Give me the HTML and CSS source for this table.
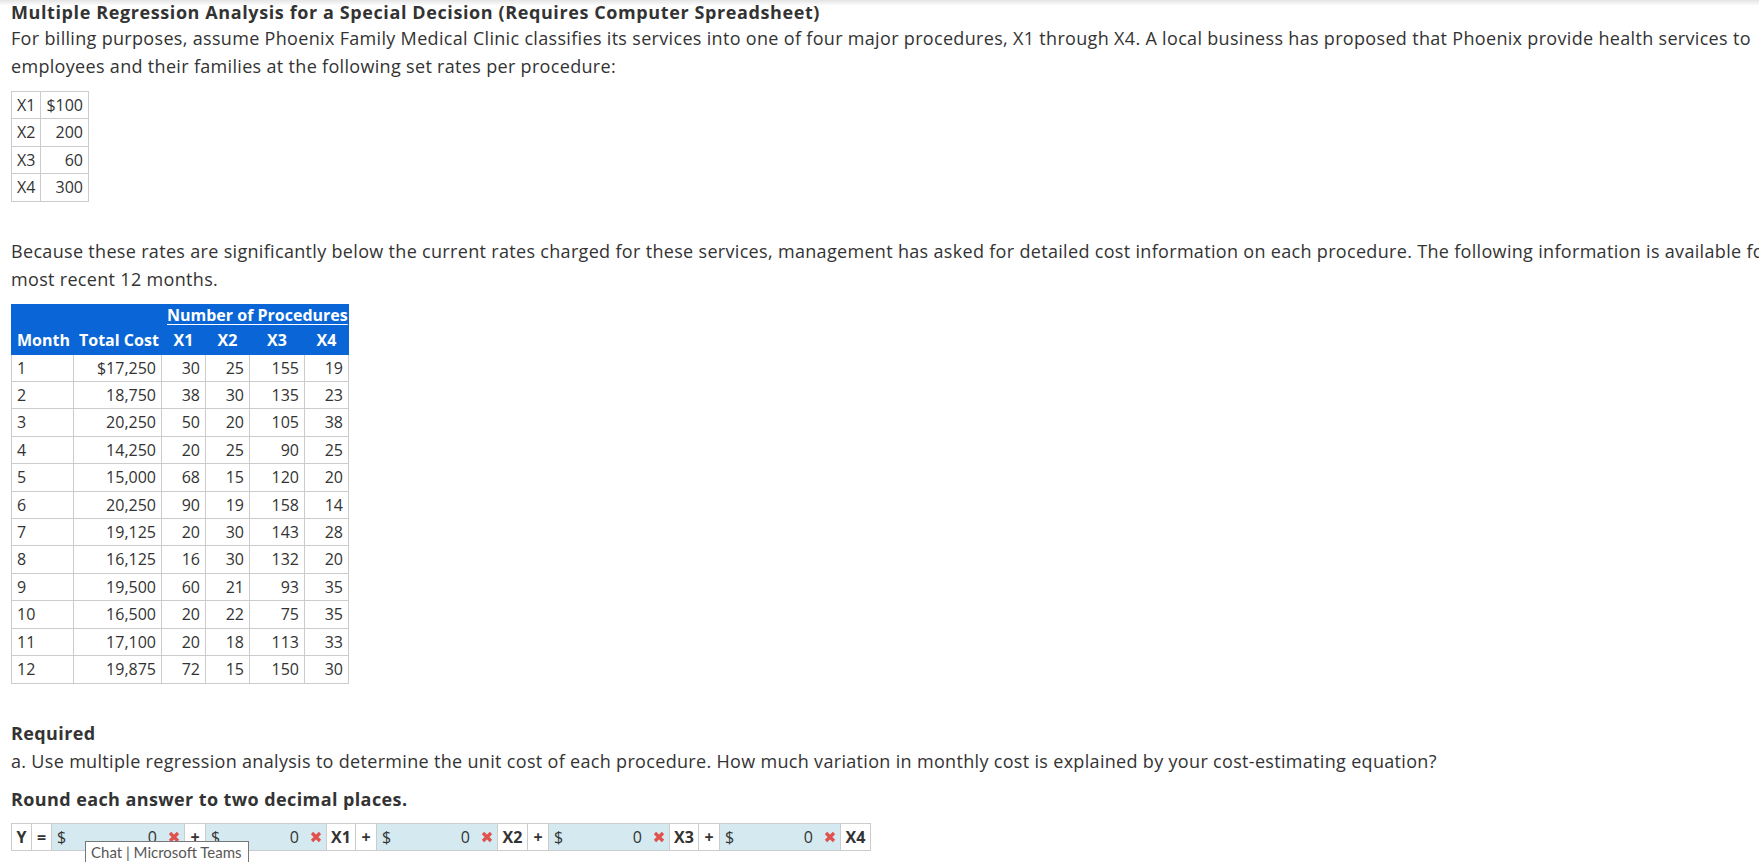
FILE: index.html
```
<!DOCTYPE html>
<html lang="en">
<head>
    <meta charset="UTF-8">
    <title>Multiple Regression Analysis</title>
    <link rel="stylesheet" href="styles.css">
</head>
<body>
    <div class="page">
        <h1 class="title">Multiple Regression Analysis for a Special Decision (Requires Computer Spreadsheet)</h1>
        <p class="text">For billing purposes, assume Phoenix Family Medical Clinic classifies its services into one of four major procedures, X1 through X4. A local business has proposed that Phoenix provide health services to<br>employees and their families at the following set rates per procedure:</p>

        <table class="grid rates">
            <tr><td>X1</td><td class="num">$100</td></tr>
            <tr><td>X2</td><td class="num">200</td></tr>
            <tr><td>X3</td><td class="num">60</td></tr>
            <tr><td>X4</td><td class="num">300</td></tr>
        </table>

        <p class="text">Because these rates are significantly below the current rates charged for these services, management has asked for detailed cost information on each procedure. The following information is available for the<br>most recent 12 months.</p>

        <table class="grid data">
            <colgroup>
                <col class="w-month"><col class="w-cost"><col class="w-x"><col class="w-x"><col class="w-x3"><col class="w-x">
            </colgroup>
            <tr class="head top">
                <th colspan="2"></th>
                <th colspan="4" class="group"><span>Number of Procedures</span></th>
            </tr>
            <tr class="head">
                <th class="left">Month</th>
                <th class="num">Total Cost</th>
                <th>X1</th><th>X2</th><th>X3</th><th>X4</th>
            </tr>
            <tr><td>1</td><td class="num">$17,250</td><td class="num">30</td><td class="num">25</td><td class="num">155</td><td class="num">19</td></tr>
            <tr><td>2</td><td class="num">18,750</td><td class="num">38</td><td class="num">30</td><td class="num">135</td><td class="num">23</td></tr>
            <tr><td>3</td><td class="num">20,250</td><td class="num">50</td><td class="num">20</td><td class="num">105</td><td class="num">38</td></tr>
            <tr><td>4</td><td class="num">14,250</td><td class="num">20</td><td class="num">25</td><td class="num">90</td><td class="num">25</td></tr>
            <tr><td>5</td><td class="num">15,000</td><td class="num">68</td><td class="num">15</td><td class="num">120</td><td class="num">20</td></tr>
            <tr><td>6</td><td class="num">20,250</td><td class="num">90</td><td class="num">19</td><td class="num">158</td><td class="num">14</td></tr>
            <tr><td>7</td><td class="num">19,125</td><td class="num">20</td><td class="num">30</td><td class="num">143</td><td class="num">28</td></tr>
            <tr><td>8</td><td class="num">16,125</td><td class="num">16</td><td class="num">30</td><td class="num">132</td><td class="num">20</td></tr>
            <tr><td>9</td><td class="num">19,500</td><td class="num">60</td><td class="num">21</td><td class="num">93</td><td class="num">35</td></tr>
            <tr><td>10</td><td class="num">16,500</td><td class="num">20</td><td class="num">22</td><td class="num">75</td><td class="num">35</td></tr>
            <tr><td>11</td><td class="num">17,100</td><td class="num">20</td><td class="num">18</td><td class="num">113</td><td class="num">33</td></tr>
            <tr><td>12</td><td class="num">19,875</td><td class="num">72</td><td class="num">15</td><td class="num">150</td><td class="num">30</td></tr>
        </table>

        <h2 class="req">Required</h2>
        <p class="text">a. Use multiple regression analysis to determine the unit cost of each procedure. How much variation in monthly cost is explained by your cost-estimating equation?</p>
        <p class="round">Round each answer to two decimal places.</p>

        <div class="eq">
            <div class="cell sym w20">Y</div>
            <div class="cell sym w20">=</div>
            <div class="cell input first"><span>$</span><span class="val">0</span><svg class="bad" viewBox="0 0 12 12"><path d="M2 2L10 10M10 2L2 10"/></svg></div>
            <div class="cell sym w21">+</div>
            <div class="cell input"><span>$</span><span class="val">0</span><svg class="bad" viewBox="0 0 12 12"><path d="M2 2L10 10M10 2L2 10"/></svg></div>
            <div class="cell sym w29">X1</div>
            <div class="cell sym w21">+</div>
            <div class="cell input"><span>$</span><span class="val">0</span><svg class="bad" viewBox="0 0 12 12"><path d="M2 2L10 10M10 2L2 10"/></svg></div>
            <div class="cell sym w30">X2</div>
            <div class="cell sym w21">+</div>
            <div class="cell input"><span>$</span><span class="val">0</span><svg class="bad" viewBox="0 0 12 12"><path d="M2 2L10 10M10 2L2 10"/></svg></div>
            <div class="cell sym w29">X3</div>
            <div class="cell sym w21">+</div>
            <div class="cell input"><span>$</span><span class="val">0</span><svg class="bad" viewBox="0 0 12 12"><path d="M2 2L10 10M10 2L2 10"/></svg></div>
            <div class="cell sym w30">X4</div>
        </div>

        <div class="tip">Chat | Microsoft Teams</div>
    </div>
</body>
</html>
```

FILE: styles.css
```
html, body {
    margin: 0;
    padding: 0;
    height: 100%;
}
body {
    background: #fff linear-gradient(#e4e4e4, #fff 6px) no-repeat;
    font-family: "Open Sans", sans-serif;
    color: #333;
    overflow: hidden;
}
.page {
    position: relative;
    min-height: 100%;
    padding-left: 11px;
}
.title {
    margin: 0;
    font-size: 18px;
    line-height: 24px;
    font-weight: 700;
    letter-spacing: 0.6px;
    white-space: nowrap;
}
.text {
    margin: 0;
    font-size: 18px;
    line-height: 28px;
    letter-spacing: 0.32px;
    white-space: nowrap;
}
.grid {
    border-collapse: collapse;
    font-size: 16px;
}
.grid td {
    border: 1px solid #ccc;
    line-height: 24.4px;
    padding: 1px 5px;
}
.num {
    text-align: right;
}
.rates {
    margin: 11px 0 35px;
}
.data {
    margin: 11px 0 35px;
    table-layout: fixed;
    width: 338px;
}
.w-month { width: 62px; }
.w-cost { width: 88px; }
.w-x { width: 44px; }
.w-x3 { width: 55px; }
.data th {
    background: #0a66d6;
    border: 1px solid #0a66d6;
    color: #fff;
    font-weight: 700;
    line-height: 28px;
    padding: 0 5px;
    text-align: center;
    white-space: nowrap;
}
.data .top th {
    line-height: 20px;
}
.data th.left {
    text-align: left;
}
.data th.num {
    text-align: right;
}
.group span {
    text-decoration: underline;
    text-underline-offset: 3px;
}
.req {
    margin: 0;
    font-size: 18px;
    line-height: 28px;
    font-weight: 700;
    letter-spacing: 0.4px;
}
.round {
    margin: 10px 0 10px;
    font-size: 18px;
    line-height: 28px;
    font-weight: 700;
    letter-spacing: 0.4px;
}
.eq {
    display: flex;
    width: max-content;
    border: 1px solid #ccc;
    border-right: none;
    font-size: 16px;
    line-height: 26px;
}
.cell {
    box-sizing: border-box;
    height: 26px;
    border-right: 1px solid #ccc;
}
.sym {
    text-align: center;
    font-weight: 700;
}
.w20 { width: 20px; }
.w21 { width: 21px; }
.w29 { width: 29px; }
.w30 { width: 30px; }
.input {
    display: flex;
    align-items: center;
    width: 121px;
    padding: 0 4px 0 5px;
    background: #d4e9f0;
}
.input.first {
    width: 133px;
}
.val {
    margin-left: auto;
}
.bad {
    width: 12px;
    height: 12px;
    margin-left: 11px;
    fill: none;
    stroke: #e0514d;
    stroke-width: 3.2;
}
.tip {
    position: absolute;
    left: 85px;
    top: 841px;
    padding: 0 6px 4px 5px;
    border: 1px solid #767676;
    background: #fff;
    color: #575757;
    font-family: Lato, sans-serif;
    font-size: 15px;
    line-height: 20px;
}
```
